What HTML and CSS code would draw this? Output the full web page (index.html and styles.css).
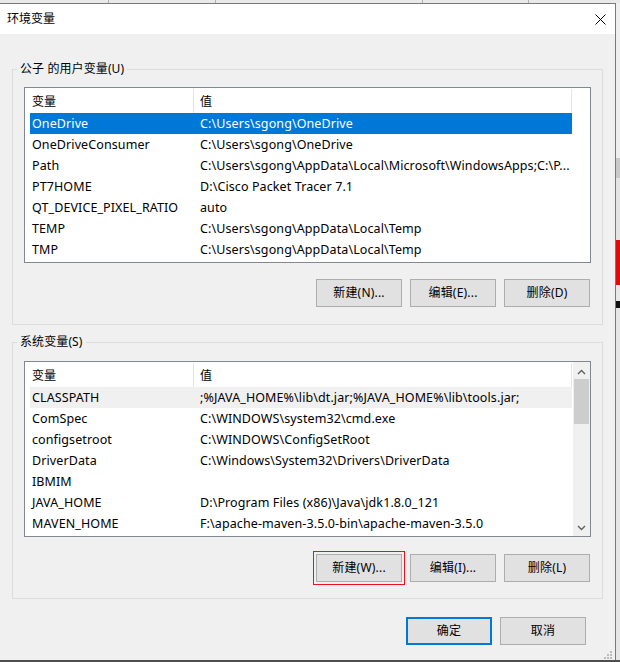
FILE: index.html
```html
<!DOCTYPE html>
<html lang="zh-CN">
<head>
<meta charset="utf-8">
<title>环境变量</title>
<link rel="stylesheet" href="styles.css">
</head>
<body>
<div class="screen">
  <div class="topstrip">
    <span class="seg seg-a"></span><span class="seg seg-b"></span><span class="seg seg-c"></span><span class="seg seg-d"></span><span class="seg seg-e"></span>
  </div>
  <div class="main">
    <div class="dialog">
      <div class="titlebar">
        <span class="title">环境变量</span>
        <svg class="close" width="11" height="11" viewBox="0 0 11 11"><path d="M0.5 0.5 L10.5 10.5 M10.5 0.5 L0.5 10.5" stroke="#000" stroke-width="1" fill="none"/></svg>
      </div>
      <div class="content">
        <div class="group g1">
          <div class="legend">公子 的用户变量(U)</div>
          <div class="list">
            <div class="table">
              <div class="thead"><div class="c1">变量</div><div class="c2">值</div></div>
              <div class="row sel"><div class="c1">OneDrive</div><div class="c2">C:\Users\sgong\OneDrive</div></div>
              <div class="row"><div class="c1">OneDriveConsumer</div><div class="c2">C:\Users\sgong\OneDrive</div></div>
              <div class="row"><div class="c1">Path</div><div class="c2">C:\Users\sgong\AppData\Local\Microsoft\WindowsApps;C:\P...</div></div>
              <div class="row"><div class="c1">PT7HOME</div><div class="c2">D:\Cisco Packet Tracer 7.1</div></div>
              <div class="row"><div class="c1">QT_DEVICE_PIXEL_RATIO</div><div class="c2">auto</div></div>
              <div class="row"><div class="c1">TEMP</div><div class="c2">C:\Users\sgong\AppData\Local\Temp</div></div>
              <div class="row"><div class="c1">TMP</div><div class="c2">C:\Users\sgong\AppData\Local\Temp</div></div>
            </div>
          </div>
          <div class="btnrow">
            <button class="btn">新建(N)...</button>
            <button class="btn">编辑(E)...</button>
            <button class="btn">删除(D)</button>
          </div>
        </div>

        <div class="group g2">
          <div class="legend">系统变量(S)</div>
          <div class="list">
            <div class="table">
              <div class="thead"><div class="c1">变量</div><div class="c2">值</div></div>
              <div class="row sel-gray"><div class="c1">CLASSPATH</div><div class="c2">;%JAVA_HOME%\lib\dt.jar;%JAVA_HOME%\lib\tools.jar;</div></div>
              <div class="row"><div class="c1">ComSpec</div><div class="c2">C:\WINDOWS\system32\cmd.exe</div></div>
              <div class="row"><div class="c1">configsetroot</div><div class="c2">C:\WINDOWS\ConfigSetRoot</div></div>
              <div class="row"><div class="c1">DriverData</div><div class="c2">C:\Windows\System32\Drivers\DriverData</div></div>
              <div class="row"><div class="c1">IBMIM</div><div class="c2"></div></div>
              <div class="row"><div class="c1">JAVA_HOME</div><div class="c2">D:\Program Files (x86)\Java\jdk1.8.0_121</div></div>
              <div class="row"><div class="c1">MAVEN_HOME</div><div class="c2">F:\apache-maven-3.5.0-bin\apache-maven-3.5.0</div></div>
            </div>
            <div class="scrollbar">
              <div class="sb-btn sb-up"><svg width="9" height="6" viewBox="0 0 9 6"><path d="M1 5 L4.5 1.5 L8 5" stroke="#606060" stroke-width="1.4" fill="none"/></svg></div>
              <div class="sb-track"><div class="sb-thumb"></div></div>
              <div class="sb-btn sb-down"><svg width="9" height="6" viewBox="0 0 9 6"><path d="M1 1 L4.5 4.5 L8 1" stroke="#606060" stroke-width="1.4" fill="none"/></svg></div>
            </div>
          </div>
          <div class="btnrow">
            <button class="btn marked">新建(W)...</button>
            <button class="btn">编辑(I)...</button>
            <button class="btn">删除(L)</button>
          </div>
        </div>

        <div class="dlgbtns">
          <button class="btn default">确定</button>
          <button class="btn">取消</button>
        </div>
        <div class="griprow">
          <svg width="9" height="9" viewBox="0 0 9 9">
            <rect x="6" y="0" width="2" height="2" fill="#bcbcbc"/>
            <rect x="3" y="3" width="2" height="2" fill="#bcbcbc"/>
            <rect x="6" y="3" width="2" height="2" fill="#bcbcbc"/>
            <rect x="0" y="6" width="2" height="2" fill="#bcbcbc"/>
            <rect x="3" y="6" width="2" height="2" fill="#bcbcbc"/>
            <rect x="6" y="6" width="2" height="2" fill="#bcbcbc"/>
          </svg>
        </div>
      </div>
    </div>
    <div class="side">
      <div class="sd sd1"></div>
      <div class="sd sd2"></div>
      <div class="sd sd3"></div>
      <div class="sd sd4"></div>
      <div class="sd sd5"></div>
      <div class="sd sd6"></div>
      <div class="sd sd7"></div>
    </div>
  </div>
  <div class="bottomstrip"></div>
</div>
</body>
</html>
```

FILE: styles.css
```css
* { box-sizing: border-box; }

html, body {
  margin: 0;
  padding: 0;
}

body {
  width: 620px;
  height: 662px;
  overflow: hidden;
  font-family: "Noto Sans", "Noto Sans CJK SC", sans-serif;
  font-size: 12px;
  color: #000;
  background: #e6e6e6;
}

.screen {
  width: 620px;
  height: 662px;
  display: flex;
  flex-direction: column;
}

/* background windows */
.topstrip {
  height: 3px;
  display: flex;
  background: #e9e9e9;
}
.seg { height: 3px; border-right: 1px solid #b0b0b0; }
.seg-a { width: 109px; }
.seg-b { width: 107px; }
.seg-c { width: 207px; }
.seg-d { width: 106px; }
.seg-e { flex: 1; border-right: none; }

.main {
  display: flex;
  height: 657px;
}

.bottomstrip {
  height: 2px;
  background: #4d4d4d;
}

.side {
  width: 4px;
  display: flex;
  flex-direction: column;
  background: #ececec;
}
.sd { width: 4px; }
.sd1 { height: 155px; background: #efefef; }
.sd2 { height: 20px; background: #c9c9c9; }
.sd3 { height: 62px; background: #e4e4e4; }
.sd4 { height: 45px; background: #e00a0a; }
.sd5 { height: 16px; background: #e8e8e8; }
.sd6 { height: 7px; background: #111; }
.sd7 { flex: 1; background: #e6e6e6; }

/* dialog */
.dialog {
  width: 616px;
  display: flex;
  flex-direction: column;
  background: #f0f0f0;
  border-top: 1px solid #7a7a7a;
  border-right: 1px solid #7a7a7a;
}

.titlebar {
  height: 30px;
  background: #fff;
  display: flex;
  align-items: center;
  justify-content: space-between;
  padding: 0 9px 0 7px;
}

.title {
  font-size: 12px;
  line-height: 16px;
}

.close { display: block; }

.content {
  flex: 1;
  display: flex;
  flex-direction: column;
  padding: 35px 12px 0 12px;
}

.group {
  border: 1px solid #dcdcdc;
  display: flex;
  flex-direction: column;
  padding: 0 11px 17px 11px;
}

.g2 {
  margin-top: 17px;
  padding-bottom: 16px;
}

.legend {
  align-self: flex-start;
  margin: -9px 0 0 -7px;
  padding: 0 3px;
  line-height: 16px;
  height: 16px;
  background: #f0f0f0;
  letter-spacing: 0.1px;
}

.list {
  height: 176px;
  margin-top: 10px;
  border: 1px solid #828790;
  background: #fff;
  padding-left: 5px;
  display: flex;
}

.g2 .list { margin-top: 11px; }

.table {
  width: 542px;
  display: flex;
  flex-direction: column;
  font-size: 12.5px;
  letter-spacing: 0.1px;
}

.thead {
  height: 25px;
  display: flex;
  align-items: stretch;
  font-size: 12px;
}

.thead .c1 {
  width: 164px;
  padding-left: 2px;
  border-right: 1px solid #e5e5e5;
  display: flex;
  align-items: center;
  margin: 1px 0 0;
}

.thead .c2 {
  width: 378px;
  padding-left: 6px;
  border-right: 1px solid #e5e5e5;
  display: flex;
  align-items: center;
  margin: 1px 0 0;
}

.row {
  height: 21px;
  display: flex;
  align-items: center;
  white-space: nowrap;
}

.row .c1 {
  width: 164px;
  padding-left: 2px;
}

.row .c2 {
  flex: 1;
  padding-left: 6px;
  overflow: hidden;
}

.row.sel {
  background: #0078d7;
  color: #fff;
}

.row.sel-gray {
  background: #f0f0f0;
}

.scrollbar {
  width: 17px;
  margin-left: 1px;
  background: #f0f0f0;
  display: flex;
  flex-direction: column;
}

.sb-btn {
  height: 17px;
  display: flex;
  align-items: center;
  justify-content: center;
}
.sb-btn svg { display: block; }
.sb-up { padding-top: 3px; }

.sb-track {
  flex: 1;
  display: flex;
  flex-direction: column;
}

.sb-thumb {
  height: 45px;
  margin: 0 1px;
  background: #cdcdcd;
}

.btnrow {
  display: flex;
  justify-content: flex-end;
  gap: 8px;
  padding-right: 1px;
  margin-top: 16px;
}

.g2 .btnrow { margin-top: 17px; }

.btn {
  width: 86px;
  height: 28px;
  margin: 0;
  padding: 0;
  font-family: "Noto Sans", "Noto Sans CJK SC", sans-serif;
  font-size: 12px;
  letter-spacing: 0.2px;
  color: #000;
  background: #e1e1e1;
  border: 1px solid #adadad;
  border-radius: 0;
  line-height: 16px;
}

.btn.marked {
  outline: 1px solid #e8141b;
  outline-offset: 2px;
}

.btn.default {
  border: 2px solid #0078d7;
}

.dlgbtns {
  display: flex;
  justify-content: flex-end;
  gap: 8px;
  margin-top: 18px;
  padding-right: 17px;
}

.griprow {
  display: flex;
  justify-content: flex-end;
  margin-top: 6px;
  height: 9px;
  padding-right: 2px;
  margin-right: -12px;
}
.griprow svg { display: block; }
```
